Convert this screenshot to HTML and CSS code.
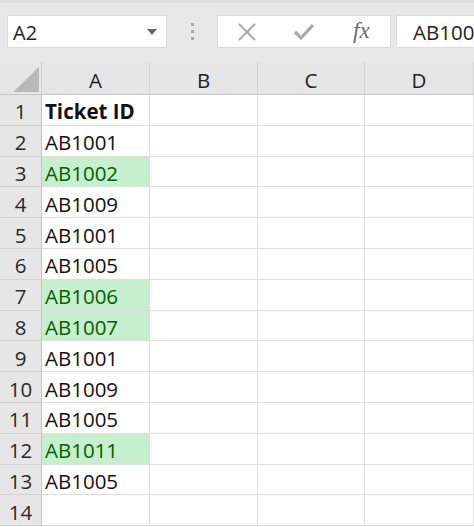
FILE: index.html
```html
<!DOCTYPE html>
<html>
<head>
<meta charset="utf-8">
<link rel="stylesheet" href="styles.css">
</head>
<body>
<div class="toolbar">
  <div class="namebox">
    <span class="namebox-text">A2</span>
    <span class="caret"></span>
  </div>
  <div class="grip"><i></i><i></i><i></i></div>
  <div class="fxbtns">
    <svg class="ico-x" width="20" height="20" viewBox="0 0 20 20"><path d="M2 2 L18 18 M18 2 L2 18" stroke="#a9a9a9" stroke-width="2" fill="none"/></svg>
    <svg class="ico-check" width="22" height="20" viewBox="0 0 22 20"><path d="M2 10 L8 16 L20 3" stroke="#a9a9a9" stroke-width="3.2" fill="none"/></svg>
    <span class="fx">fx</span>
  </div>
  <div class="formula">AB1001</div>
</div>
<div class="sheet">
  <div class="corner"><span class="tri"></span></div>
  <div class="colhead">A</div>
  <div class="colhead">B</div>
  <div class="colhead">C</div>
  <div class="colhead">D</div>

  <div class="rowhead">1</div><div class="cell bold">Ticket ID</div><div class="cell"></div><div class="cell"></div><div class="cell"></div>
  <div class="rowhead">2</div><div class="cell">AB1001</div><div class="cell"></div><div class="cell"></div><div class="cell"></div>
  <div class="rowhead">3</div><div class="cell dup">AB1002</div><div class="cell"></div><div class="cell"></div><div class="cell"></div>
  <div class="rowhead">4</div><div class="cell">AB1009</div><div class="cell"></div><div class="cell"></div><div class="cell"></div>
  <div class="rowhead">5</div><div class="cell">AB1001</div><div class="cell"></div><div class="cell"></div><div class="cell"></div>
  <div class="rowhead">6</div><div class="cell">AB1005</div><div class="cell"></div><div class="cell"></div><div class="cell"></div>
  <div class="rowhead">7</div><div class="cell dup">AB1006</div><div class="cell"></div><div class="cell"></div><div class="cell"></div>
  <div class="rowhead">8</div><div class="cell dup">AB1007</div><div class="cell"></div><div class="cell"></div><div class="cell"></div>
  <div class="rowhead">9</div><div class="cell">AB1001</div><div class="cell"></div><div class="cell"></div><div class="cell"></div>
  <div class="rowhead">10</div><div class="cell">AB1009</div><div class="cell"></div><div class="cell"></div><div class="cell"></div>
  <div class="rowhead">11</div><div class="cell">AB1005</div><div class="cell"></div><div class="cell"></div><div class="cell"></div>
  <div class="rowhead">12</div><div class="cell dup">AB1011</div><div class="cell"></div><div class="cell"></div><div class="cell"></div>
  <div class="rowhead">13</div><div class="cell">AB1005</div><div class="cell"></div><div class="cell"></div><div class="cell"></div>
  <div class="rowhead">14</div><div class="cell"></div><div class="cell"></div><div class="cell"></div><div class="cell"></div>
</div>
</body>
</html>
```

FILE: styles.css
```css
html, body {
  margin: 0;
  padding: 0;
  background: #ffffff;
  overflow: hidden;
}
body {
  width: 474px;
  height: 527px;
  font-family: "Open Sans", "Noto Sans", sans-serif;
  color: #1b1b1b;
}
.toolbar {
  height: 62px;
  box-sizing: border-box;
  background: #e8e8e8;
  border-top: 3px solid #dedede;
  display: flex;
  align-items: flex-start;
  padding-top: 12px;
  overflow: hidden;
  white-space: nowrap;
}
.namebox {
  margin-left: 7px;
  width: 160px;
  height: 33px;
  box-sizing: border-box;
  background: #ffffff;
  border: 1px solid #dcdcdc;
  display: flex;
  align-items: center;
  justify-content: space-between;
  padding: 1px 9px 0 5px;
  flex: none;
}
.namebox-text {
  font-size: 20px;
  color: #222;
}
.caret {
  width: 0;
  height: 0;
  border-left: 5px solid transparent;
  border-right: 5px solid transparent;
  border-top: 6px solid #666;
}
.grip {
  width: 50px;
  height: 33px;
  display: flex;
  flex-direction: column;
  align-items: center;
  justify-content: center;
  gap: 4px;
  flex: none;
}
.grip i {
  display: block;
  width: 3px;
  height: 3px;
  background: #a8a8a8;
}
.fxbtns {
  width: 174px;
  height: 33px;
  box-sizing: border-box;
  background: #ffffff;
  border: 1px solid #dcdcdc;
  display: flex;
  align-items: center;
  padding-left: 19px;
  flex: none;
}
.ico-x { flex: none; }
.ico-check { flex: none; margin-left: 36px; }
.fx {
  margin-left: 38px;
  font-family: "Liberation Serif", "DejaVu Serif", serif;
  font-style: italic;
  font-size: 23px;
  color: #6b6b6b;
  line-height: 1;
  padding-bottom: 3px;
}
.formula {
  margin-left: 5px;
  height: 33px;
  flex: 1;
  min-width: 0;
  box-sizing: border-box;
  background: #ffffff;
  border: 1px solid #dcdcdc;
  border-right: none;
  font-size: 20.5px;
  color: #222;
  padding: 1px 0 0 16px;
  display: flex;
  align-items: center;
  overflow: hidden;
}
.sheet {
  display: grid;
  grid-template-columns: 42px 108px 108px 107px 109px;
  grid-template-rows: 33px;
  grid-auto-rows: 30.8px;
}
.corner {
  background: #e6e6e6;
  border-right: 1px solid #cfcfcf;
  border-bottom: 1px solid #c4c4c4;
  box-sizing: border-box;
  position: relative;
}
.tri {
  position: absolute;
  right: 2px;
  bottom: 2px;
  width: 0;
  height: 0;
  border-left: 26px solid transparent;
  border-bottom: 25px solid #b9b9b9;
}
.colhead {
  background: #e6e6e6;
  border-right: 1px solid #d2d2d2;
  border-bottom: 1px solid #c4c4c4;
  box-sizing: border-box;
  display: flex;
  align-items: center;
  justify-content: center;
  font-size: 20.5px;
  color: #222;
  padding-top: 3px;
}
.rowhead {
  background: #e6e6e6;
  border-right: 1px solid #c4c4c4;
  border-bottom: 1px solid #d2d2d2;
  box-sizing: border-box;
  display: flex;
  align-items: center;
  justify-content: center;
  font-size: 20.5px;
  color: #2a2a2a;
  padding-top: 3px;
}
.cell {
  border-right: 1px solid #dedede;
  border-bottom: 1px solid #dedede;
  box-sizing: border-box;
  display: flex;
  align-items: center;
  padding: 3px 0 0 3px;
  font-size: 20.5px;
  color: #111;
  white-space: nowrap;
}
.cell.bold {
  font-weight: 700;
}
.cell.dup {
  background: #c6efce;
  color: #006100;
}
```
